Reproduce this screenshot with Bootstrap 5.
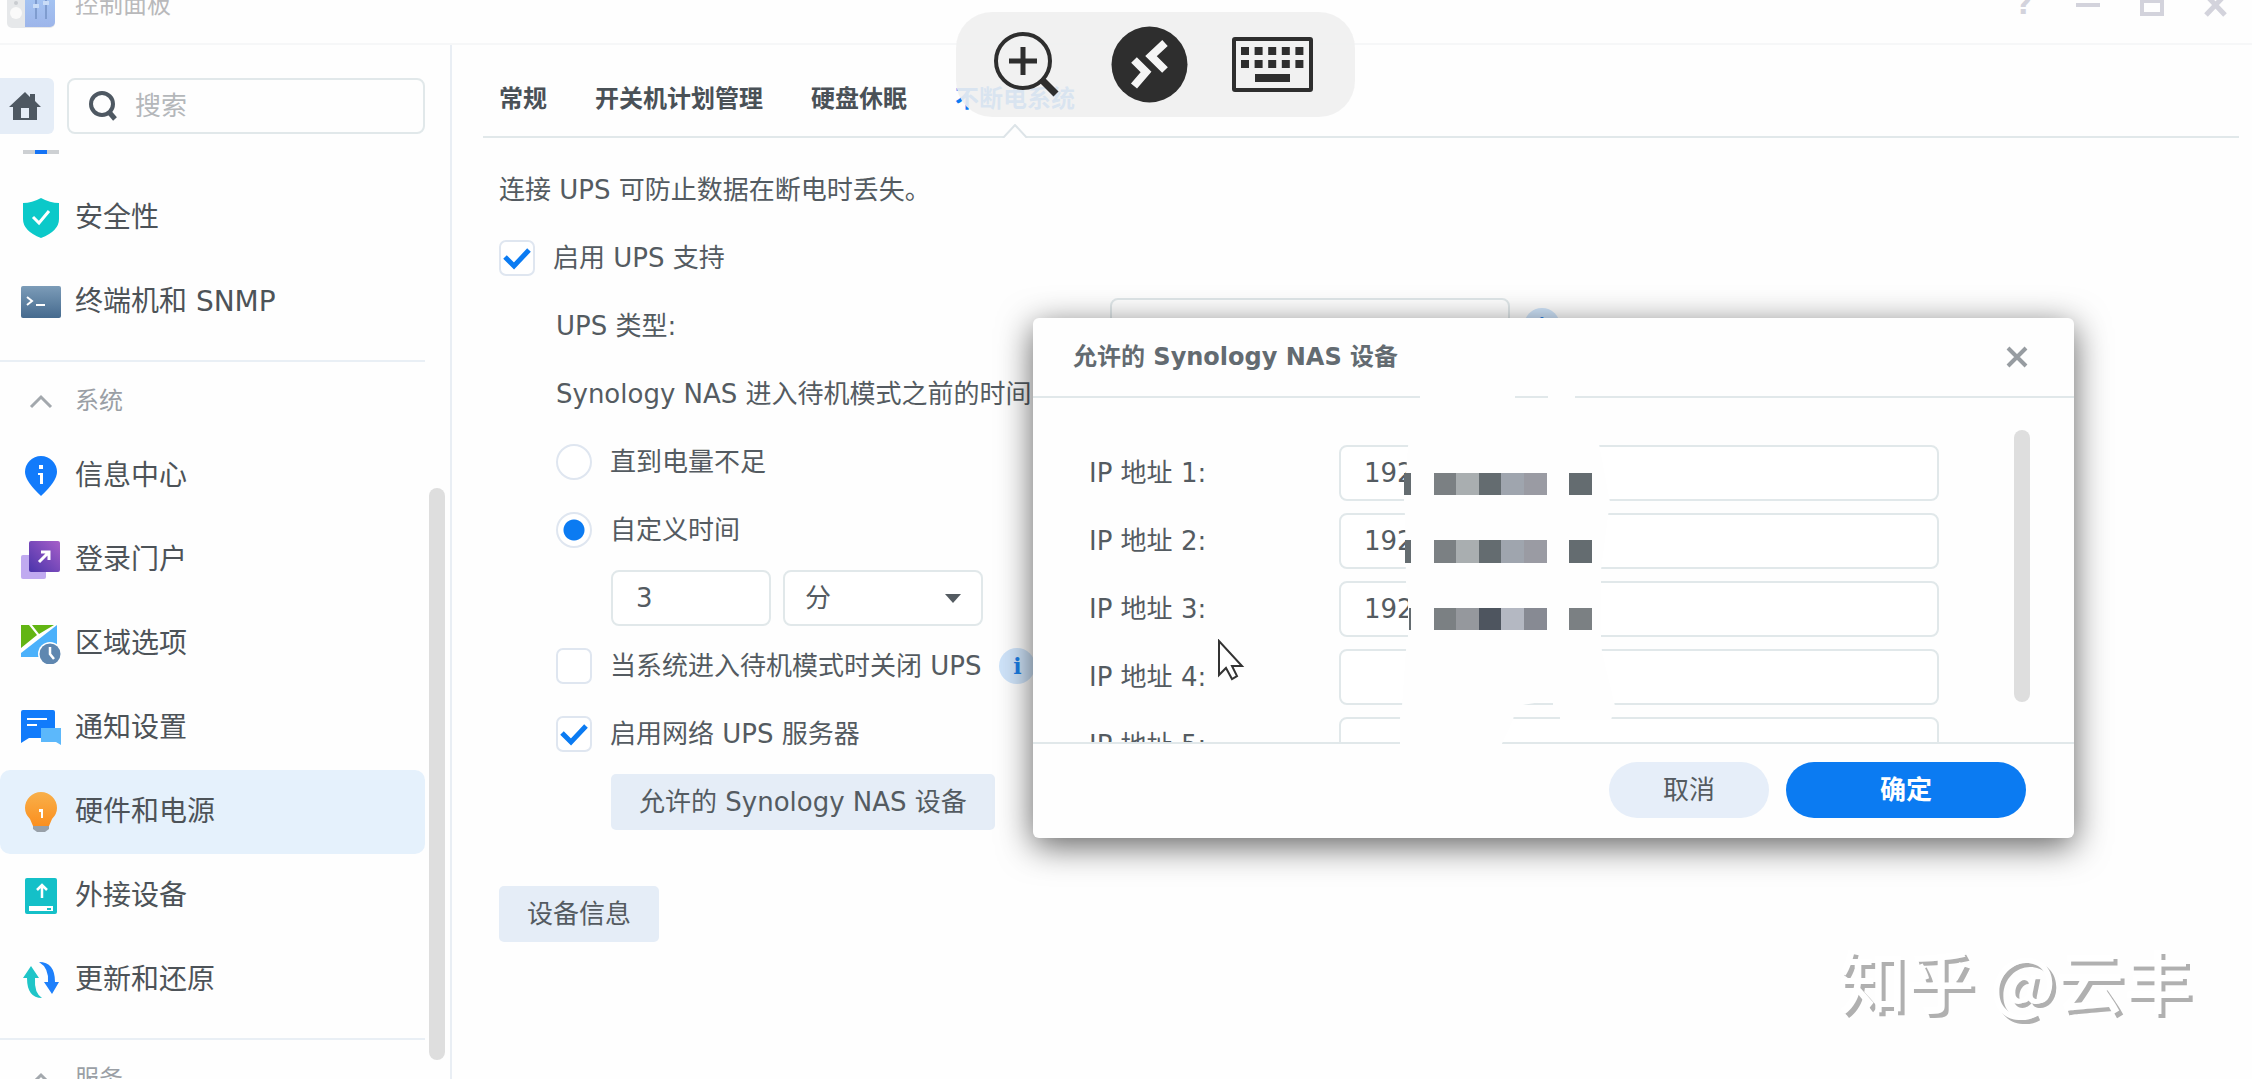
<!DOCTYPE html>
<html lang="zh-CN">
<head>
<meta charset="utf-8">
<meta name="viewport" content="width=device-width, initial-scale=1">
<title>控制面板</title>
<link href="https://cdn.jsdelivr.net/npm/bootstrap@5.3.0/dist/css/bootstrap.min.css" rel="stylesheet">
<style>
  :root { --line: #e1e8ea; --ink: #545b61; --soft: #e5edf7; --blue: #0b7bf2; }
  body { font-family: "DejaVu Sans", "Noto Sans CJK SC", sans-serif; font-size: 26px; line-height: 36px; color: var(--ink); background: #fefefe; }
  svg { display: block; flex: none; }
  .desk { height: 100vh; }

  .title-bar { height: 80px; margin-top: -35px; border-bottom: 2px solid #f6f7f8; padding: 2px 24px 0 7px; color: #b9b9bb; font-size: 24px; flex: none; }
  .win-btn { width: 24px; height: 36px; padding: 0; border: 0; background: none; color: #d3d3dc; display: flex; align-items: center; justify-content: center; font-size: 28px; font-weight: 700; }
  .win-btns { gap: 40px; }

  .side { width: 452px; border-right: 2px solid #e9eef4; flex: none; }
  .search-row { padding: 33px 25px 16px 0; gap: 13px; }
  .home-btn { width: 54px; height: 56px; border: 0; border-radius: 0 6px 6px 0; background: var(--soft); padding: 0 0 0 9px; flex: none; }
  .search-box { height: 56px; min-width: 0; border: 2px solid var(--line); border-radius: 8px; padding: 0 18px 0 20px; gap: 18px; }
  .search-box input { border: 0; outline: 0; padding: 0; width: 100%; min-width: 0; background: none; }
  .search-box input::placeholder { color: #b4b7ba; opacity: 1; }
  .side-list { margin: -58px 25px 0 0; font-size: 28px; }
  .side-item { height: 84px; display: flex; align-items: center; gap: 14px; padding-left: 21px; color: #4d5358; text-decoration: none; }
  .side-item.active { background: #e5f1fc; border-radius: 10px; }
  .side-head { height: 74px; margin-top: 16px; padding: 6px 0 0 21px; border-top: 2px solid #e9eff5; display: flex; align-items: center; gap: 14px; font-size: 24px; color: #9a9fa5; }
  .thumb { position: absolute; background: #dedede; border-radius: 8px; width: 16px; }
  .side .thumb { right: 5px; top: 443px; height: 572px; }

  .work { padding: 0 13px 0 31px; }
  .tab-row { height: 93px; border-bottom: 2px solid var(--line); padding: 17px 0 0 16px; gap: 48px; font-size: 24px; font-weight: 700; }
  .tab-row a { color: #4a5157; text-decoration: none; position: relative; height: 100%; display: flex; align-items: center; }
  .tab-row a.active { color: var(--blue); }
  .tab-row svg { position: absolute; bottom: -2px; left: calc(50% - 14px); }

  .panel { padding: 18px 0 0 16px; }
  .opt { height: 68px; display: flex; align-items: center; gap: 18px; }
  .lvl { padding-left: 57px; }
  .lvl2 { padding-left: 112px; gap: 12px; }
  .opt .form-check-input { width: 36px; height: 36px; margin: 0; border: 2px solid #dfe6f0; background-color: #fff; flex: none; box-shadow: none; }
  .opt .form-check-input[type=checkbox] { border-radius: 7px; }
  .opt .form-check-input[type=checkbox]:checked { background: #fff url("data:image/svg+xml,%3Csvg xmlns='http://www.w3.org/2000/svg' viewBox='0 0 32 32'%3E%3Cpath d='M4 15l9 9L28 8' fill='none' stroke='%230b7bf2' stroke-width='5'/%3E%3C/svg%3E") center/32px no-repeat; }
  .opt .form-check-input[type=radio]:checked { background: #fff radial-gradient(circle, #0b7bf2 10px, transparent 11px); }
  .type-label { width: 540px; flex: none; }
  .type-row { gap: 14px; }
  .field { height: 56px; border: 2px solid var(--line); border-radius: 8px; font-size: 26px; color: var(--ink); padding: 0 23px; background-color: #fff; }
  .field-num { width: 160px; }
  .field-unit { width: 200px; padding-left: 20px; background: #fff url("data:image/svg+xml,%3Csvg xmlns='http://www.w3.org/2000/svg' viewBox='0 0 16 9'%3E%3Cpath d='M0 0h16L8 9z' fill='%23545b61'/%3E%3C/svg%3E") right 20px center/16px 9px no-repeat; }
  .field-type { width: 400px; }
  .info-dot { width: 36px; height: 36px; border-radius: 50%; background: #cfe4fa; color: #1a7ee6; font: 700 22px/36px "DejaVu Serif", serif; text-align: center; flex: none; }
  .soft-btn { height: 56px; border: 0; border-radius: 5px; background: var(--soft); color: var(--ink); padding: 0 28px; }
  .gap-top { margin-top: 44px; }

  .dialog-win { position: absolute; left: 1033px; top: 318px; width: 1041px; background: #fefefe; border-radius: 6px; box-shadow: 0 8px 34px rgba(0,0,0,.62); z-index: 5; }
  .dialog-top { height: 80px; padding: 0 46px 0 40px; border-bottom: 2px solid var(--line); font-size: 24px; font-weight: 700; color: #636b71; }
  .dialog-mid { height: 344px; padding: 41px 135px 0 56px; overflow: hidden; position: relative; }
  .dialog-mid .opt { gap: 0; }
  .dialog-mid label { width: 250px; flex: none; }
  .dialog-mid .thumb { right: 44px; top: 32px; height: 272px; }
  .dialog-end { border-top: 2px solid var(--line); padding: 18px 48px 20px; gap: 17px; }
  .pill-btn { height: 56px; border: 0; border-radius: 28px; width: 160px; background: #e6eef9; color: var(--ink); }
  .pill-ok { width: 240px; background: var(--blue); color: #fff; font-weight: 700; }
  .close-x { border: 0; background: none; padding: 0; }
  .hide-ip { position: absolute; left: 357px; top: 72px; z-index: 1; }

  .float-bar { position: absolute; left: 956px; top: 12px; height: 105px; width: 399px; border-radius: 36px; background: rgba(239,239,239,.9); z-index: 8; }
  .float-bar button { border: 0; background: none; padding: 0; position: relative; }
  .pointer { position: absolute; left: 1217px; top: 639px; z-index: 9; }
  .wm { position: absolute; right: 60px; bottom: 52px; font: 500 68px/96px "Noto Sans CJK SC", sans-serif; color: #fff; text-shadow: 4px 4px 0 #b0b0b0; white-space: nowrap; }
</style>
</head>
<body>
<div class="desk d-flex flex-column overflow-hidden position-relative">

  <header class="title-bar d-flex align-items-center justify-content-between">
    <div class="d-flex align-items-center gap-3">
      <svg width="52" height="48" viewBox="0 0 52 48"><defs><linearGradient id="cp" x2="0" y2="1"><stop stop-color="#a9cdf7"/><stop offset="1" stop-color="#9db5ea"/></linearGradient></defs><rect width="48" height="47" rx="5" fill="#e6e8ea"/><path d="M18 0h25a5 5 0 0 1 5 5v36a5 5 0 0 1-5 5H18z" fill="url(#cp)"/><circle cx="9" cy="32" r="6" fill="#fafafa"/><circle cx="9" cy="22" r="2" fill="#c9ccd0"/><path d="M29 14v24M39 14v24" stroke="#7f9ccf" stroke-width="2"/><path d="M26 25h6M36 22h6" stroke="#c9dcf7" stroke-width="4"/></svg>
      <span>控制面板</span>
    </div>
    <div class="win-btns d-flex">
      <button class="win-btn" aria-label="帮助">?</button>
      <button class="win-btn" aria-label="最小化"><svg width="24" height="24" viewBox="0 0 24 24"><path d="M0 12h24" stroke="currentColor" stroke-width="4"/></svg></button>
      <button class="win-btn" aria-label="最大化"><svg width="24" height="24" viewBox="0 0 24 24"><path d="M2 2h20v19H2zM2 8h20" fill="none" stroke="currentColor" stroke-width="4"/></svg></button>
      <button class="win-btn" aria-label="关闭"><svg width="24" height="24" viewBox="0 0 24 24"><path d="M2 2l19 20M21 2L2 22" stroke="currentColor" stroke-width="5"/></svg></button>
    </div>
  </header>

  <div class="d-flex flex-grow-1 overflow-hidden">
    <aside class="side d-flex flex-column position-relative overflow-hidden">
      <div class="search-row d-flex">
        <button class="home-btn" aria-label="主页"><svg width="32" height="28" viewBox="0 0 32 28"><path d="M16 0l5 5V2h5v7l6 6h-4v13H4V15H0zM12 16v10h8V16z" fill="#4e5862" fill-rule="evenodd"/></svg></button>
        <div class="search-box d-flex align-items-center flex-grow-1">
          <svg width="28" height="30" viewBox="0 0 28 30"><circle cx="13" cy="13" r="11" fill="none" stroke="#4e5862" stroke-width="4"/><path d="M20 21l6 7" stroke="#4e5862" stroke-width="5"/></svg>
          <input type="search" placeholder="搜索" aria-label="搜索">
        </div>
      </div>
      <div class="flex-grow-1 overflow-hidden">
        <nav class="side-list">
          <div class="side-item"><svg width="40" height="40" viewBox="0 0 40 40"><path d="M2 36h36v4H2z" fill="#cdd0d3"/><path d="M14 36h12v4H14z" fill="#1473f5"/></svg></div>
          <a class="side-item" href="#"><svg width="40" height="40" viewBox="0 0 40 40"><path d="M20 0q9 5 18 5v16q0 12-18 19Q2 33 2 21V5q9 0 18-5z" fill="#0bc9c9"/><path d="M12 19l6 6 10-12" fill="none" stroke="#fff" stroke-width="3"/></svg>安全性</a>
          <a class="side-item" href="#"><svg width="40" height="40" viewBox="0 0 40 40"><defs><linearGradient id="tm" x2="0" y2="1"><stop stop-color="#7c9cb8"/><stop offset="1" stop-color="#456a8e"/></linearGradient></defs><rect y="4" width="40" height="32" rx="2" fill="url(#tm)"/><path d="M6 15l5 4-5 4M15 23h9" fill="none" stroke="#fff" stroke-width="2"/></svg>终端机和 SNMP</a>
          <div class="side-head"><svg width="40" height="16" viewBox="0 0 40 16"><path d="M10 14L20 4l10 10" fill="none" stroke="#a3a8ad" stroke-width="3"/></svg>系统</div>
          <a class="side-item" href="#"><svg width="40" height="40" viewBox="0 0 40 40"><path d="M20 0a16 16 0 0 1 16 16q0 9-16 24Q4 25 4 16A16 16 0 0 1 20 0z" fill="#127bfb"/><path d="M18 9h4v4h-4zM17 17h5v11h-3v-9h-2z" fill="#fff"/></svg>信息中心</a>
          <a class="side-item" href="#"><svg width="40" height="40" viewBox="0 0 40 40"><defs><linearGradient id="pt" x1="1" x2="0" y2="1"><stop stop-color="#a75fc9"/><stop offset="1" stop-color="#4a34ab"/></linearGradient></defs><rect y="15" width="25" height="24" rx="2" fill="#c0aaf0"/><rect x="8" y="1" width="31" height="31" rx="2" fill="url(#pt)"/><path d="M18 22l10-10M20 12h8v8" fill="none" stroke="#fff" stroke-width="3"/></svg>登录门户</a>
          <a class="side-item" href="#"><svg width="40" height="40" viewBox="0 0 40 40"><path d="M0 1h36v32H0z" fill="#fff"/><path d="M0 1h8l8 10L0 24zM11 1h22L18 10z" fill="#62b513"/><path d="M36 1v32H0v-4z" fill="#4bb1fb"/><circle cx="29" cy="30" r="12" fill="#fff"/><circle cx="29" cy="30" r="10.500" fill="#5f87b0"/><path d="M29 23v7l4 5" fill="none" stroke="#fff" stroke-width="2.500"/></svg>区域选项</a>
          <a class="side-item" href="#"><svg width="40" height="40" viewBox="0 0 40 40"><path d="M2 2h30a2 2 0 0 1 2 2v26H8l-8 5V4a2 2 0 0 1 2-2z" fill="#117bfb"/><path d="M6 11h20M6 17h10" stroke="#fff" stroke-width="2"/><path d="M20 20h20v17l-5-3H20z" fill="#5cb8fb"/></svg>通知设置</a>
          <a class="side-item active" href="#"><svg width="40" height="40" viewBox="0 0 40 40"><defs><linearGradient id="bl" x2="0" y2="1"><stop stop-color="#f8b04b"/><stop offset="1" stop-color="#fb8f1e"/></linearGradient></defs><path d="M20 0a16 16 0 0 1 16 16q0 6-5 11l-3 7H12l-3-7q-5-5-5-11A16 16 0 0 1 20 0z" fill="url(#bl)"/><path d="M12 34h16v3l-4 3h-8l-4-3z" fill="#98a0a8"/><path d="M18 17h4v9h-2v-6h-2z" fill="#fff"/></svg>硬件和电源</a>
          <a class="side-item" href="#"><svg width="40" height="40" viewBox="0 0 40 40"><rect x="4" y="2" width="32" height="36" rx="2" fill="#14c0c8"/><path d="M8 30h24v5H8z" fill="#fff"/><path d="M26 33h4" stroke="#14c0c8" stroke-width="2"/><path d="M21 22V10M16 14l5-5 5 5" fill="none" stroke="#fff" stroke-width="2.500"/></svg>外接设备</a>
          <a class="side-item" href="#"><svg width="40" height="40" viewBox="0 0 40 40"><path d="M2 18L10 6l8 12h-4q-1 15 7 20Q6 38 6 18z" fill="#1fc5c8"/><path d="M18 2q16 0 16 20h4l-7 12-8-12h4q1-14-9-20z" fill="#1e80fb"/></svg>更新和还原</a>
          <div class="side-head"><svg width="40" height="16" viewBox="0 0 40 16"><path d="M10 14L20 4l10 10" fill="none" stroke="#a3a8ad" stroke-width="3"/></svg>服务</div>
        </nav>
      </div>
      <div class="thumb"></div>
    </aside>

    <main class="work flex-grow-1">
      <nav class="tab-row d-flex">
        <a href="#">常规</a>
        <a href="#">开关机计划管理</a>
        <a href="#">硬盘休眠</a>
        <a href="#" class="active">不断电系统<svg width="28" height="14" viewBox="0 0 28 14"><path d="M2 14L14 1l12 13" fill="#fefefe" stroke="#dde4e8" stroke-width="2"/></svg></a>
      </nav>
      <form class="panel">
        <div class="opt">连接 UPS 可防止数据在断电时丢失。</div>
        <div class="opt"><input class="form-check-input" type="checkbox" id="ups" checked><label for="ups">启用 UPS 支持</label></div>
        <div class="opt lvl type-row"><label class="type-label" for="upsType">UPS 类型:</label><input class="field field-type" id="upsType" type="text"><span class="info-dot">i</span></div>
        <div class="opt lvl">Synology NAS 进入待机模式之前的时间</div>
        <div class="opt lvl"><input class="form-check-input" type="radio" name="wait" id="low"><label for="low">直到电量不足</label></div>
        <div class="opt lvl"><input class="form-check-input" type="radio" name="wait" id="custom" checked><label for="custom">自定义时间</label></div>
        <div class="opt lvl2">
          <input class="field field-num" type="text" value="3" aria-label="时间">
          <select class="form-select field field-unit" aria-label="单位"><option>分</option></select>
        </div>
        <div class="opt lvl"><input class="form-check-input" type="checkbox" id="off"><label for="off">当系统进入待机模式时关闭 UPS</label><span class="info-dot">i</span></div>
        <div class="opt lvl"><input class="form-check-input" type="checkbox" id="net" checked><label for="net">启用网络 UPS 服务器</label></div>
        <div class="opt lvl2"><button class="soft-btn" type="button">允许的 Synology NAS 设备</button></div>
        <div class="opt gap-top"><button class="soft-btn" type="button">设备信息</button></div>
      </form>
    </main>
  </div>

  <section class="dialog-win" role="dialog" aria-labelledby="dlg">
    <div class="dialog-top d-flex align-items-center justify-content-between">
      <span id="dlg">允许的 Synology NAS 设备</span>
      <button class="close-x" aria-label="关闭"><svg width="22" height="22" viewBox="0 0 22 22"><path d="M2 2l18 18M20 2L2 20" stroke="#979ca1" stroke-width="4"/></svg></button>
    </div>
    <div class="dialog-mid">
      <div class="opt"><label for="ip1">IP 地址 1:</label><input class="field flex-grow-1" id="ip1" type="text" value="192"></div>
      <div class="opt"><label for="ip2">IP 地址 2:</label><input class="field flex-grow-1" id="ip2" type="text" value="192"></div>
      <div class="opt"><label for="ip3">IP 地址 3:</label><input class="field flex-grow-1" id="ip3" type="text" value="192"></div>
      <div class="opt"><label for="ip4">IP 地址 4:</label><input class="field flex-grow-1" id="ip4" type="text"></div>
      <div class="opt"><label for="ip5">IP 地址 5:</label><input class="field flex-grow-1" id="ip5" type="text"></div>
      <div class="thumb"></div>
    </div>
    <div class="dialog-end d-flex justify-content-end">
      <button class="pill-btn">取消</button>
      <button class="pill-btn pill-ok">确定</button>
    </div>
    <!-- brushed-out part of the addresses -->
    <svg class="hide-ip" width="240" height="370" viewBox="1390 390 240 370">
      <path d="M1420 390H1515V402H1548V390H1575V402L1599 444 1610 502 1608 516 1601 570 1601 640 1602 652 1615 706 1611 720H1560V712H1553V700L1516 706 1513 720 1499 750H1400V718L1402 706 1406 650 1408 636 1408 600 1406 582 1405 516 1404 500 1408 446 1420 402z" fill="#fefefe"/>
      <g fill="#646c70"><path d="M1404 473h7v22h-7zM1569 473h23v22h-23zM1405 540h6v23h-6zM1569 540h23v23h-23z"/><path d="M1409 608h2v22h-2z"/><path d="M1479 473h22v22h-22zM1479 540h22v23h-22z"/></g>
      <path d="M1434 473h22v22h-22zM1434 540h22v23h-22zM1434 608h22v22h-22zM1569 608h23v22h-23z" fill="#7b8083"/>
      <path d="M1456 473h23v22h-23zM1456 540h23v23h-23z" fill="#a9aeb0"/>
      <path d="M1456 608h23v22h-23z" fill="#95989d"/>
      <path d="M1479 608h22v22h-22z" fill="#4e555f"/>
      <path d="M1501 473h23v22h-23zM1501 540h23v23h-23z" fill="#9fa5ae"/>
      <path d="M1501 608h23v22h-23z" fill="#b4b8c2"/>
      <path d="M1524 473h23v22h-23zM1524 540h23v23h-23z" fill="#9a9ba3"/>
      <path d="M1524 608h23v22h-23z" fill="#878a93"/>
    </svg>
  </section>

  <div class="float-bar d-flex align-items-center">
    <button aria-label="放大"><svg width="146" height="105" viewBox="956 12 146 105"><circle cx="1023" cy="61" r="27" fill="none" stroke="#2e2e2e" stroke-width="4"/><path d="M1009 61h28M1023 47v28" stroke="#2e2e2e" stroke-width="5"/><path d="M1041 79l15 15" stroke="#2e2e2e" stroke-width="7"/></svg></button>
    <button aria-label="远程桌面"><svg width="96" height="105" viewBox="1102 12 96 105"><circle cx="1149.500" cy="64.500" r="38" fill="#2e2e2e"/><path d="M1134 60l12 12-12 14M1165 43l-14 13 14 14" fill="none" stroke="#f5f5f5" stroke-width="8"/></svg></button>
    <button aria-label="键盘"><svg width="150" height="105" viewBox="1198 12 150 105"><rect x="1234" y="39" width="77" height="51" rx="1" fill="none" stroke="#2e2e2e" stroke-width="4"/><path d="M1241 51h64M1241 64h64" stroke="#2e2e2e" stroke-width="8" stroke-dasharray="8 5.600"/><path d="M1255 78h35" stroke="#2e2e2e" stroke-width="8"/></svg></button>
  </div>

  <svg class="pointer" width="28" height="42" viewBox="0 0 28 42"><path d="M2 2v34l7-7 6 11 5-3-5-10h10z" fill="#fff" stroke="#333" stroke-width="2"/></svg>
  <div class="wm">知乎 @云丰</div>
</div>
<script src="https://cdn.jsdelivr.net/npm/bootstrap@5.3.0/dist/js/bootstrap.bundle.min.js"></script>
</body>
</html>
